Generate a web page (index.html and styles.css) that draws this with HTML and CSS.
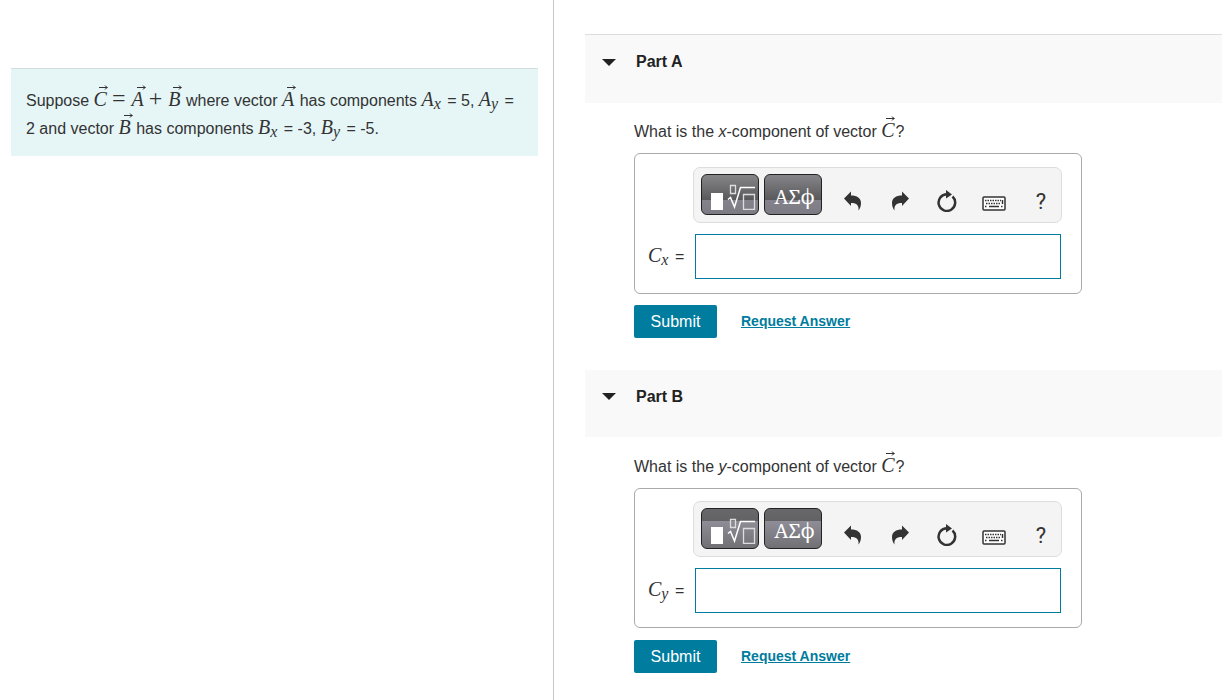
FILE: index.html
```html
<!DOCTYPE html>
<html lang="en">
<head>
  <meta charset="UTF-8" />
  <meta name="viewport" content="width=device-width, initial-scale=1.0"/>
  <title>Vector Components</title>
  <link rel="stylesheet" href="styles.css">
</head>
<body>
  <svg class="sprite" aria-hidden="true">
    <symbol id="arrow" viewBox="0 0 9 5">
      <path d="M0 2.5H8M6 .5Q6.7 2 8.5 2.5Q6.7 3 6 4.5" fill="none" stroke="currentColor"/>
    </symbol>
    <symbol id="templates" viewBox="0 0 46 28">
      <path d="M0 11h12v17H0z" fill="#fff"/>
      <path d="M19.5 3.5h5v8h-5z" fill="none" stroke="#ddd" stroke-width="1.3"/>
      <path d="M17 17.500l2.500-2 4 9.500L29.500 5.500H44" fill="none" stroke="#fff" stroke-width="1.5"/>
      <path d="M32.5 12.500h11v15h-11z" fill="none" stroke="#ddd" stroke-width="1.3"/>
    </symbol>
    <symbol id="undo" viewBox="0 0 18 20">
      <path d="M0 7.500L7 0.500V4.500C13 4.500 17 7 17 12C17 15 16 17.500 14.500 19.500C15 14.500 13 12 7 12V15Z" fill="#333"/>
    </symbol>
    <symbol id="redo" viewBox="0 0 18 20">
      <path d="M18 7.500L11 0.500V4.500C5 4.500 1 7 1 12C1 15 2 17.500 3.500 19.500C3 14.500 5 12 11 12V15Z" fill="#333"/>
    </symbol>
    <symbol id="reset" viewBox="0 0 20 22">
      <path d="M15.5 6.500A8.3 8.3 0 1 1 10 4.300" fill="none" stroke="#333" stroke-width="2.5"/>
      <path d="M9 0L15 4.500L9 8.500Z" fill="#333"/>
    </symbol>
    <symbol id="keyboard" viewBox="0 0 24 15">
      <rect x="1" y="1" width="22" height="13" rx="1" fill="#fff" stroke="#333" stroke-width="1.5"/>
      <path d="M3 4.500H19M4 7.500H18M3 10.500H5M19 10.500H21" fill="none" stroke="#333" stroke-width="1.5" stroke-dasharray="1.5 1"/>
      <path d="M7 10.500H17M20.500 4V8" fill="none" stroke="#333" stroke-width="1.5"/>
    </symbol>
  </svg>

  <main class="layout">
    <aside class="problem-pane">
      <div class="problem">
        Suppose <i class="vec">C<svg><use href="#arrow"/></svg></i><span class="op">=</span><i class="vec">A<svg><use href="#arrow"/></svg></i><span class="op">+</span><i class="vec">B<svg><use href="#arrow"/></svg></i> where vector <i class="vec">A<svg><use href="#arrow"/></svg></i> has components <i class="var">A<sub>x</sub></i> = 5, <i class="var">A<sub>y</sub></i> = 2 and vector <i class="vec">B<svg><use href="#arrow"/></svg></i> has components <i class="var">B<sub>x</sub></i> = -3, <i class="var">B<sub>y</sub></i> = -5.
      </div>
    </aside>

    <div class="parts">
      <section class="part first">
        <h2><span class="caret"></span>Part A</h2>
        <div class="part-body">
          <p>What is the <em>x</em>-component of vector <i class="vec">C<svg><use href="#arrow"/></svg></i>?</p>
          <div class="answer">
            <div class="toolbar">
              <div class="palettes">
                <button class="palette" aria-label="Templates"><svg class="templates"><use href="#templates"/></svg></button>
                <button class="palette">ΑΣϕ</button>
              </div>
              <button class="tool" aria-label="Undo"><svg width="18" height="20"><use href="#undo"/></svg></button>
              <button class="tool" aria-label="Redo"><svg width="18" height="20"><use href="#redo"/></svg></button>
              <button class="tool" aria-label="Reset"><svg width="20" height="22"><use href="#reset"/></svg></button>
              <button class="tool" aria-label="Keyboard shortcuts"><svg class="keyboard" width="24" height="15"><use href="#keyboard"/></svg></button>
              <button class="tool" aria-label="Help">?</button>
            </div>
            <label for="cx"><i class="var">C<sub>x</sub></i> =</label>
            <input type="text" id="cx">
          </div>
          <div class="actions">
            <button class="submit">Submit</button>
            <a href="#">Request Answer</a>
          </div>
        </div>
      </section>

      <section class="part">
        <h2><span class="caret"></span>Part B</h2>
        <div class="part-body">
          <p>What is the <em>y</em>-component of vector <i class="vec">C<svg><use href="#arrow"/></svg></i>?</p>
          <div class="answer">
            <div class="toolbar">
              <div class="palettes">
                <button class="palette light" aria-label="Templates"><svg class="templates"><use href="#templates"/></svg></button>
                <button class="palette light">ΑΣϕ</button>
              </div>
              <button class="tool" aria-label="Undo"><svg width="18" height="20"><use href="#undo"/></svg></button>
              <button class="tool" aria-label="Redo"><svg width="18" height="20"><use href="#redo"/></svg></button>
              <button class="tool" aria-label="Reset"><svg width="20" height="22"><use href="#reset"/></svg></button>
              <button class="tool" aria-label="Keyboard shortcuts"><svg class="keyboard" width="24" height="15"><use href="#keyboard"/></svg></button>
              <button class="tool" aria-label="Help">?</button>
            </div>
            <label for="cy"><i class="var">C<sub>y</sub></i> =</label>
            <input type="text" id="cy">
          </div>
          <div class="actions">
            <button class="submit">Submit</button>
            <a href="#">Request Answer</a>
          </div>
        </div>
      </section>
    </div>
  </main>
</body>
</html>
```
FILE: styles.css
```css
* {
  box-sizing: border-box;
}
body {
  margin: 0;
  font-family: "Liberation Sans", Arial, sans-serif;
  font-size: 16px;
  line-height: 28px;
  color: #333;
  background: #fff;
}
.sprite {
  display: none;
}
.layout {
  display: grid;
  grid-template-columns: 554fr 668fr;
  min-height: 100vh;
}
.problem-pane {
  padding: 68px 15px 0 11px;
  border-right: 1px solid #c3c7cf;
}
.problem {
  padding: 18px 15px 13px;
  border-top: 1px solid #d5dcdd;
  background: #e6f6f7;
}

/* math */
.vec,
.var,
.op {
  font-family: "Liberation Serif", "Times New Roman", serif;
  font-size: 20px;
  line-height: 20px;
}
.vec {
  display: inline-block;
  position: relative;
  margin-right: 1px;
}
.vec svg {
  position: absolute;
  top: -4px;
  left: 5px;
  width: 9px;
  height: 5px;
}
.op {
  margin: 0 6px 0 4px;
  font-size: 24px;
}
.var sub {
  margin-right: 2px;
  font-size: 16px;
  line-height: 0;
  vertical-align: -3px;
}

/* parts */
.parts {
  padding: 34px 0 0 31px;
}
.part {
  margin-bottom: 32px;
}
.part h2 {
  display: flex;
  align-items: center;
  gap: 20px;
  height: 67px;
  margin: 0;
  padding: 0 0 14px 17px;
  font-size: 16px;
  color: #222;
  background: #f9f9f9;
}
.part.first h2 {
  height: 69px;
  border-top: 1px solid #ddd;
}
.caret {
  border: 7px solid transparent;
  border-top-color: #222;
  border-bottom: 0;
}
.part-body {
  padding: 16px 20px 0 49px;
}
.part.first .part-body {
  padding-top: 15px;
}
.part-body p {
  margin: 0 0 7px;
}
.answer {
  display: grid;
  grid-template-columns: 46px 1fr;
  gap: 11px 1px;
  align-items: center;
  max-width: 448px;
  padding: 12px 20px 14px 13px;
  border: 1px solid #aaa;
  border-radius: 6px;
}
.part.first .answer {
  padding-top: 13px;
}
.toolbar {
  grid-column: 2;
  display: flex;
  align-items: flex-start;
  gap: 15px;
  height: 56px;
  margin: 0 -1px 0 -2px;
  padding: 6px 3px 6px 7px;
  border: 1px solid #ddd;
  border-radius: 7px;
  background: #f4f4f4;
}
.palettes {
  display: flex;
  gap: 5px;
}
.palette {
  width: 58px;
  height: 41px;
  padding: 3px 0 0 3px;
  border: 1px solid #222;
  border-radius: 6px;
  background: linear-gradient(#86868a, #58585a 65%, #84838d 65%, #7c7b83);
  font-family: "Noto Serif", "Liberation Serif", serif;
  font-size: 20px;
  color: #fff;
}
.palette.light {
  background: linear-gradient(#68686a, #626264 30%, #8f8e98 30%, #707074);
}
.templates {
  display: block;
  width: 46px;
  height: 28px;
  margin-left: 6px;
}
.tool {
  display: flex;
  align-items: center;
  justify-content: center;
  flex: none;
  width: 32px;
  height: 54px;
  padding: 0;
  border: 0;
  background: none;
  font-family: Roboto, sans-serif;
  font-size: 22px;
  color: #333;
}
.keyboard {
  margin-top: 4px;
}
.answer input {
  width: 100%;
  height: 45px;
  padding: 0 8px;
  border: 1px solid #007c9e;
  background: #fff;
  font-size: 18px;
}
.actions {
  display: flex;
  align-items: center;
  gap: 24px;
  margin-top: 12px;
}
.part.first .actions {
  margin-top: 11px;
}
.submit {
  width: 83px;
  height: 33px;
  padding: 0;
  border: 0;
  border-radius: 2px;
  background: #007c9e;
  font-family: "Liberation Sans", Arial, sans-serif;
  font-size: 16px;
  color: #fff;
}
.actions a {
  padding-bottom: 2px;
  font-size: 14px;
  font-weight: bold;
  color: #007c9e;
}
```
